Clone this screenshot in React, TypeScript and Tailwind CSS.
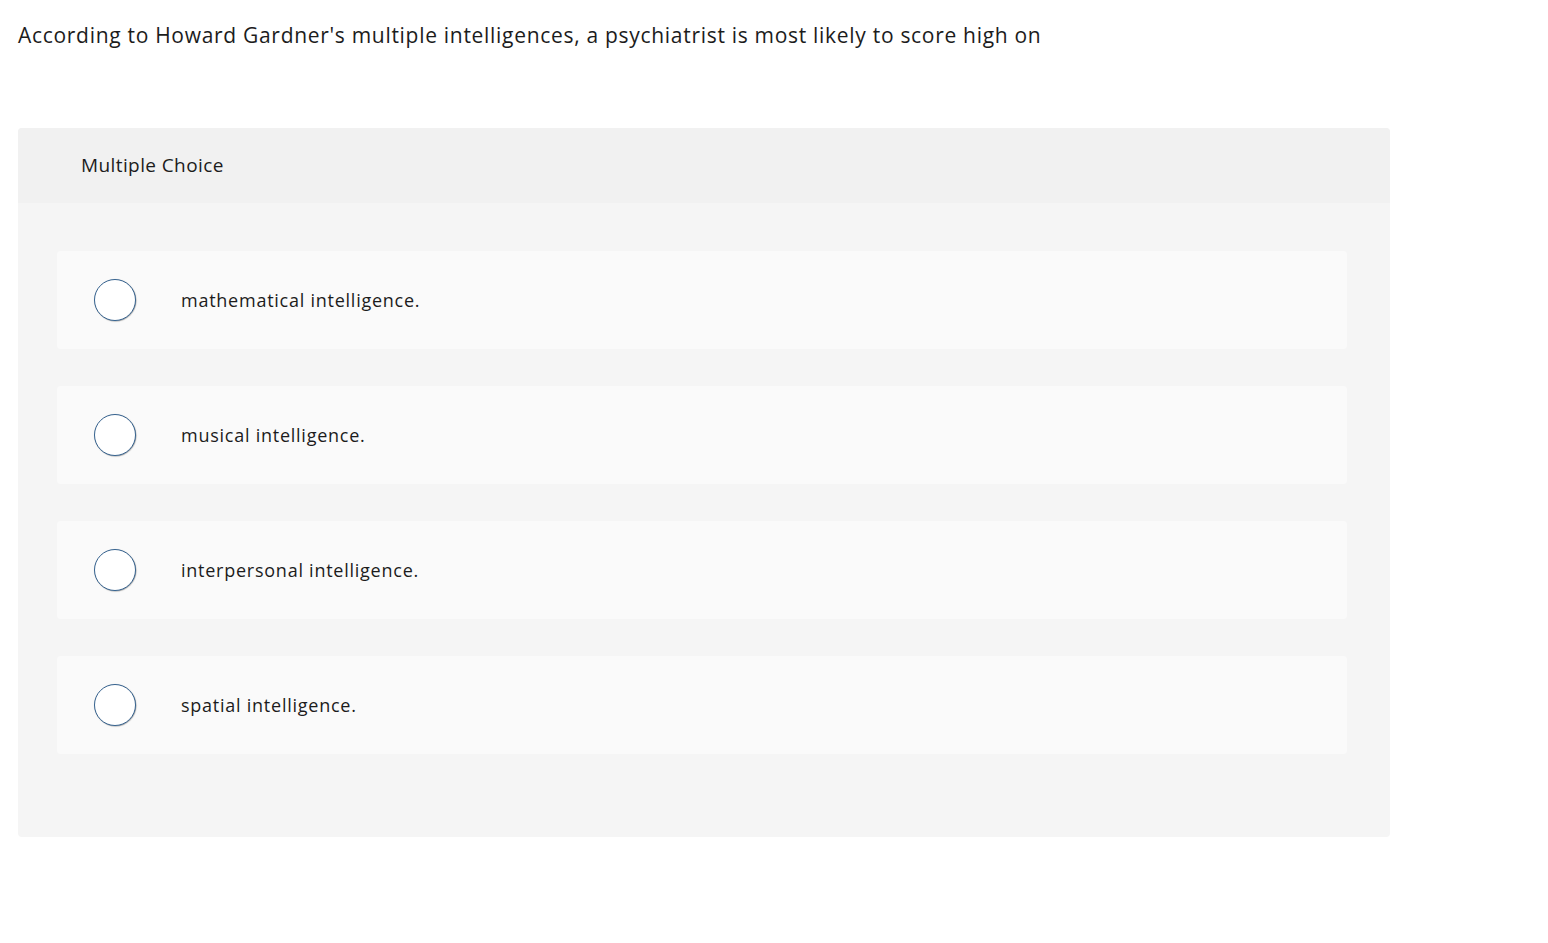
import React from "react";

const options = [
  "mathematical intelligence.",
  "musical intelligence.",
  "interpersonal intelligence.",
  "spatial intelligence.",
];

export default function App() {
  return (
    <div
      className="min-h-screen bg-white text-[#1c1c1c]"
      style={{ fontFamily: "'Open Sans', 'Noto Sans', sans-serif" }}
    >
      <div className="pl-[18px] pt-[20px]">
        <p className="text-[21px] leading-[30px] tracking-[0.7px]">
          According to Howard Gardner's multiple intelligences, a psychiatrist is most likely to score high on
        </p>
        <div className="mt-[78px] w-[1372px] rounded-[4px] bg-[#f5f5f5] overflow-hidden">
          <div className="h-[75px] bg-[#f1f1f1] pl-[63px] flex items-center">
            <span className="text-[19px] tracking-[0.4px]">Multiple Choice</span>
          </div>
          <div className="pl-[39px] pr-[43px] pt-[48px] pb-[83px] flex flex-col gap-[37px]">
            {options.map((o) => (
              <div
                key={o}
                className="h-[98px] rounded-[4px] bg-[#fafafa] flex items-center pl-[37px]"
              >
                <div className="w-[42px] h-[42px] rounded-full border-[1.5px] border-[#35628f] bg-white shrink-0 shadow-[0.5px_0.5px_1px_rgba(0,0,0,0.35)]" />
                <span className="ml-[45px] text-[18px] tracking-[0.75px]">{o}</span>
              </div>
            ))}
          </div>
        </div>
      </div>
    </div>
  );
}
